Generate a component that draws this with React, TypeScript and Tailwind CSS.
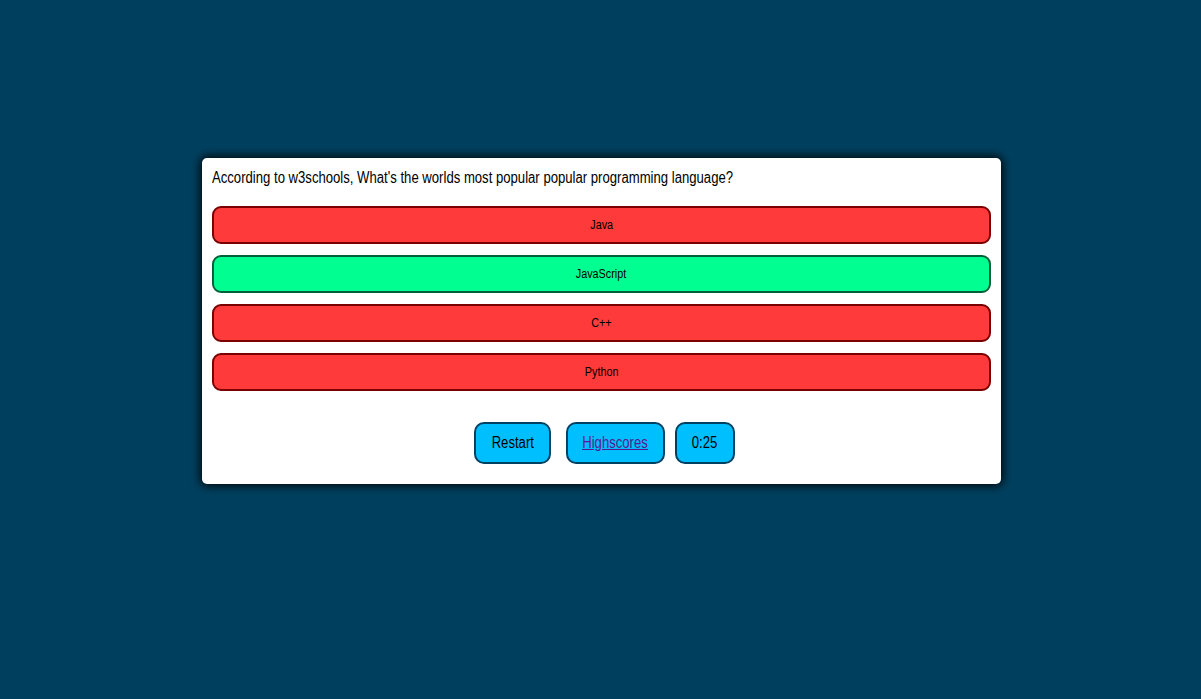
import React from "react";

export default function App() {
  const answers = [
    { t: "Java", ok: false },
    { t: "JavaScript", ok: true },
    { t: "C++", ok: false },
    { t: "Python", ok: false },
  ];
  return (
    <div className="w-[1201px] h-[699px] bg-[#00405f] flex items-start pl-[202px] pt-[158px]" style={{ fontFamily: '"Liberation Sans", Arial, sans-serif' }}>
      <div className="w-[799px] bg-white rounded-[5px] shadow-[0_0_10px_2px_rgba(0,0,0,0.9)] px-[10px] pt-[10px] pb-[20px]">
        <div className="text-[16px] leading-[19px] text-black whitespace-nowrap">
          <span className="inline-block scale-x-[0.82] origin-left">According to w3schools, What's the worlds most popular popular programming language?</span>
        </div>
        <div className="mt-[19px] flex flex-col gap-[11px]">
          {answers.map((a) => (
            <div
              key={a.t}
              className={
                a.ok
                  ? "h-[38px] rounded-[9px] border-2 border-[#00603a] bg-[#00ff90] flex items-center justify-center text-[12px] text-black"
                  : "h-[38px] rounded-[9px] border-2 border-[#7a0000] bg-[#ff3a3a] flex items-center justify-center text-[12px] text-black"
              }
            >
              <span className="inline-block scale-x-[0.9]">{a.t}</span>
            </div>
          ))}
        </div>
        <div className="mt-[31px] flex justify-center items-center">
          <div className="ml-[6px] h-[42px] w-[77px] rounded-[10px] border-2 border-[#004060] bg-[#00bfff] flex items-center justify-center text-[16px] text-black">
            <span className="inline-block scale-x-[0.82]">Restart</span>
          </div>
          <div className="ml-[15px] h-[42px] w-[99px] rounded-[10px] border-2 border-[#004060] bg-[#00bfff] flex items-center justify-center text-[16px] text-[#551a8b] underline">
            <span className="inline-block scale-x-[0.82] underline">Highscores</span>
          </div>
          <div className="ml-[10px] h-[42px] w-[60px] rounded-[10px] border-2 border-[#004060] bg-[#00bfff] flex items-center justify-center text-[16px] text-black">
            <span className="inline-block scale-x-[0.82]">0:25</span>
          </div>
        </div>
      </div>
    </div>
  );
}
